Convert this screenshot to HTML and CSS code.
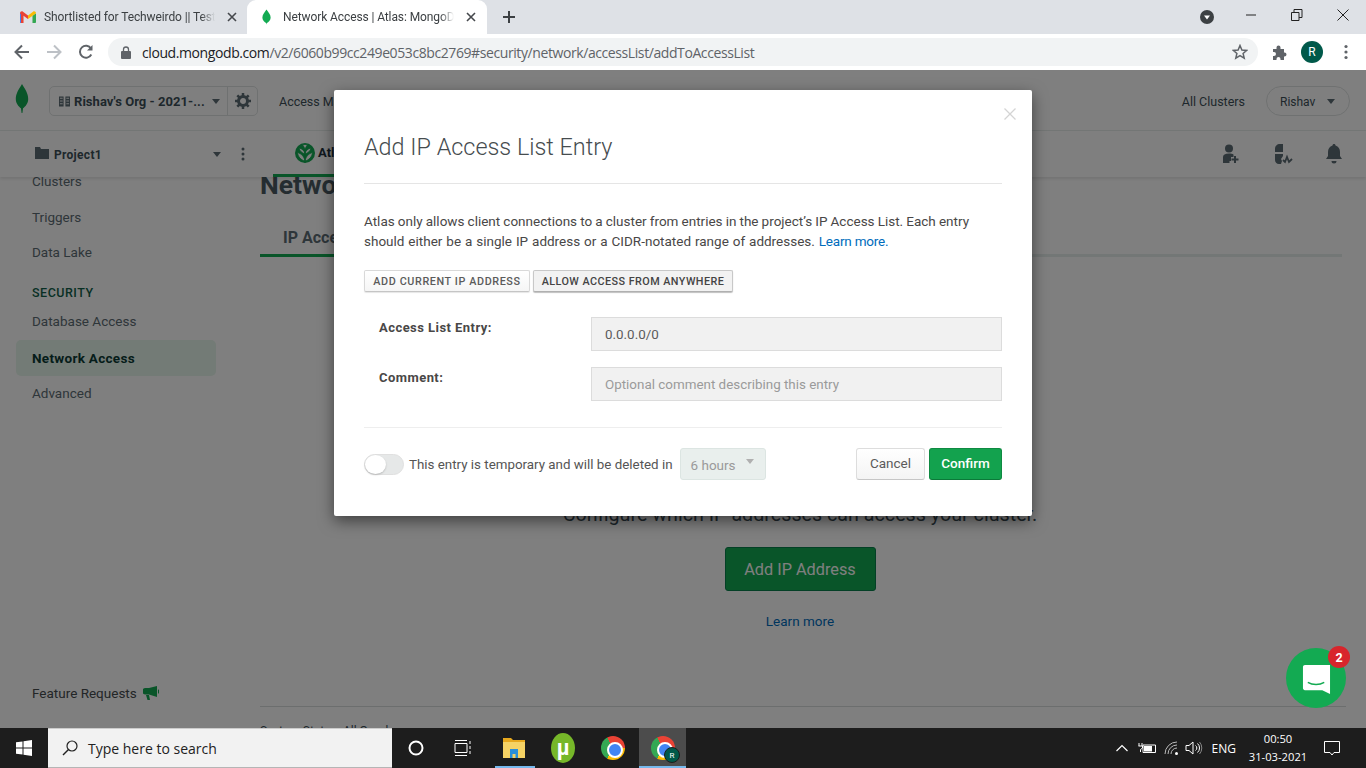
FILE: index.html
```html
<!DOCTYPE html>
<html lang="en">
<head>
<meta charset="utf-8">
<title>Network Access | Atlas: MongoDB</title>
<link rel="stylesheet" href="styles.css">
</head>
<body>
<header class="tabstrip">
  <div class="tab">
    <svg class="tab-icon" viewBox="0 0 16 12" width="16" height="12"><path d="M1 12V2l7 5 7-5v10h-3V5.5L8 8.5 4 5.5V12z" fill="#ddd"/><path d="M0 2.200C0 .5 1.800-.3 3 .7L8 4.500 8 8 3.500 4.700V12H1.100C.5 12 0 11.500 0 11z" fill="#ea4335"/><path d="M1 12V3.500L0 2.200V11c0 .5.5 1 1.100 1z" fill="#4285f4"/><path d="M12.500 12V4.700L16 2.200V11c0 .5-.5 1-1.100 1z" fill="#34a853"/><path d="M8 4.500 13 .7c1.200-1 3-.2 3 1.500L8 8z" fill="#fbbc04"/></svg>
    <span class="tab-title">Shortlisted for Techweirdo || Test</span>
    <svg class="tab-x" viewBox="0 0 10 10" width="10" height="10"><path d="M1 1l8 8M9 1l-8 8" stroke="#45484c" stroke-width="1.600"/></svg>
  </div>
  <div class="tab tab-active">
    <svg class="tab-leaf" viewBox="0 0 12 20" width="9" height="16"><path d="M6 0C3 4 .5 7 .5 11c0 3.500 3 6 5 7l.5 2 .5-2c2-1 5-3.500 5-7 0-4-2.500-7-5.500-11z" fill="#13aa52"/></svg>
    <span class="tab-title">Network Access | Atlas: MongoDB</span>
    <svg class="tab-x" viewBox="0 0 10 10" width="10" height="10"><path d="M1 1l8 8M9 1l-8 8" stroke="#45484c" stroke-width="1.600"/></svg>
  </div>
  <svg class="tab-plus" viewBox="0 0 12 12" width="12" height="12"><path d="M6 0v12M0 6h12" stroke="#3c4043" stroke-width="2"/></svg>
  <div class="strip-right">
    <svg class="profile-drop" viewBox="0 0 14 14" width="14" height="14"><circle cx="7" cy="7" r="7" fill="#3c4043"/><path d="M4 5.500h6L7 9.500z" fill="#fff"/></svg>
    <div class="winbtn"><svg viewBox="0 0 12 12" width="12" height="12"><path d="M1 6h10" stroke="#222" stroke-width="1"/></svg></div>
    <div class="winbtn"><svg viewBox="0 0 12 12" width="12" height="12"><path d="M.5 3.500h7.500v8H.5zM3 3.500V.5h8v8H8" fill="none" stroke="#222"/></svg></div>
    <div class="winbtn"><svg viewBox="0 0 12 12" width="12" height="12"><path d="M.5.5l11 11M11.500.5l-11 11" stroke="#222"/></svg></div>
  </div>
</header>

<nav class="toolbar">
  <svg class="tool" viewBox="0 0 16 16" width="16" height="16"><path d="M15 8H2M8 1.500 1.500 8 8 14.500" fill="none" stroke="#5f6368" stroke-width="2"/></svg>
  <svg class="tool" viewBox="0 0 16 16" width="16" height="16"><path d="M1 8h13M8 1.500 14.500 8 8 14.500" fill="none" stroke="#bdc1c6" stroke-width="2"/></svg>
  <svg class="tool" viewBox="0 0 16 16" width="16" height="16"><path d="M13.300 10.500A6 6 0 1 1 13 4.500" fill="none" stroke="#5f6368" stroke-width="2"/><path d="M14.500 1v5.500H9z" fill="#5f6368"/></svg>
  <div class="omnibox">
    <svg viewBox="0 0 10 13" width="10" height="13"><path d="M2.500 5V3.500a2.500 2.500 0 0 1 5 0V5" fill="none" stroke="#5f6368" stroke-width="1.300"/><rect y="5" width="10" height="8" rx="1" fill="#5f6368"/></svg>
    <span class="url"><b>cloud.mongodb.com</b>/v2/6060b99cc249e053c8bc2769#security/network/accessList/addToAccessList</span>
    <svg class="star" viewBox="0 0 16 16" width="16" height="16"><path d="M8 1.500 9.900 6l4.800.4-3.600 3.100 1.100 4.700L8 11.700l-4.200 2.500 1.100-4.700L1.300 6.400 6.100 6z" fill="none" stroke="#5f6368" stroke-width="1.500"/></svg>
  </div>
  <svg class="puzzle" viewBox="0 0 16 16" width="16" height="16"><path d="M1 5h3.500V3.500a2 2 0 0 1 4 0V5H12v3.500h.5a2 2 0 0 1 0 4H12V16H8.500v-1a2 2 0 0 0-4 0v1H1v-4h1a2 2 0 0 0 0-4H1z" fill="#5f6368"/></svg>
  <span class="avatar">R</span>
  <svg class="menu-dots" viewBox="0 0 4 16" width="4" height="16"><circle cx="2" cy="2.500" r="1.600" fill="#5f6368"/><circle cx="2" cy="8" r="1.600" fill="#5f6368"/><circle cx="2" cy="13.500" r="1.600" fill="#5f6368"/></svg>
</nav>

<main class="page">
  <div class="topbar">
    <svg class="logo" viewBox="0 0 12 28" width="14" height="29"><path d="M6 0C3 5 0 9 0 14.500c0 4.500 3 7.500 5 9l.6 4.500h.8l.6-4.500c2-1.500 5-4.500 5-9C12 9 9 5 6 0z" fill="#13aa52"/></svg>
    <div class="org">
      <div class="org-main">
        <svg viewBox="0 0 12 12" width="11" height="12"><path d="M0 1h5v11H0zM7 1h5v11H7z" fill="#5d6c74"/><path d="M1 3h3M1 6h3M1 9h3M8 3h3M8 6h3M8 9h3" stroke="#fff" stroke-width="1"/></svg>
        <span class="org-name">Rishav's Org - 2021-...</span>
        <i class="caret"></i>
      </div>
      <div class="org-gear">
        <svg viewBox="0 0 16 16" width="16" height="16"><circle cx="8" cy="8" r="4.500" fill="none" stroke="#5d6c74" stroke-width="3"/><path d="M8 0v3M8 13v3M0 8h3M13 8h3M2.300 2.300l2.200 2.200M11.500 11.500l2.200 2.200M13.700 2.300l-2.200 2.200M4.500 11.500l-2.200 2.200" stroke="#5d6c74" stroke-width="2.500"/></svg>
      </div>
    </div>
    <span class="top-link">Access Manager</span>
    <span class="top-link all-clusters">All Clusters</span>
    <div class="user-pill"><span>Rishav</span><i class="caret"></i></div>
  </div>

  <div class="subbar">
    <svg class="folder" viewBox="0 0 14 12" width="14" height="12"><path d="M0 0h5l1 2h8v10H0z" fill="#5d6c74"/></svg>
    <span class="project">Project1</span>
    <i class="caret"></i>
    <svg class="kebab" viewBox="0 0 4 14" width="4" height="14"><circle cx="2" cy="2" r="1.500" fill="#5d6c74"/><circle cx="2" cy="7" r="1.500" fill="#5d6c74"/><circle cx="2" cy="12" r="1.500" fill="#5d6c74"/></svg>
    <div class="atlas-tab">
      <svg viewBox="0 0 20 20" width="20" height="20"><circle cx="10" cy="10" r="10" fill="#13aa52"/><path d="M10 20V6M10 18C6 17 3 14 2.500 9.500 6 10.500 9 13 10 18zM10 18c4-1 7-4 7.500-8.500C14 10.500 11 13 10 18zM10 11C7 10 4.500 8 4 5c3 .5 5.500 2.500 6 6zM10 11c3-1 5.500-3 6-6-3 .5-5.500 2.500-6 6zM10 6 7.500 1.500h5z" fill="#fff" stroke="#13aa52" stroke-width=".8"/></svg>
      <span>Atlas</span>
    </div>
    <div class="sub-icons">
      <svg viewBox="0 0 18 20" width="18" height="20"><circle cx="7" cy="4.500" r="4" fill="#5d6c74"/><path d="M1 19v-6c0-2 2-3.500 6-3.500 2 0 3.500.3 4.500 1V13H9v4H7.500v2z" fill="#5d6c74"/><path d="M13 12v7M9.500 15.500h7" stroke="#5d6c74" stroke-width="2"/></svg>
      <svg viewBox="0 0 20 20" width="20" height="20"><path d="M7 0h3v8H2V5c0-3 2-5 5-5zM2 10h8v2l-2 3 1 2-1 3H6c-2.500 0-4-2-4-4z" fill="#5d6c74"/><path d="M10 16l2 2 2-5 2 5 3-3" fill="none" stroke="#5d6c74" stroke-width="1.800"/></svg>
      <svg viewBox="0 0 16 20" width="16" height="20"><path d="M8 0c1 0 1.500.7 1.500 1.500C12.500 2.500 14 5 14 8v4l2 3H0l2-3V8c0-3 1.500-5.500 4.500-6.500C6.500.7 7 0 8 0zM5.500 17h5a2.500 2.500 0 0 1-5 0z" fill="#5d6c74"/></svg>
    </div>
  </div>

  <div class="content-row">
    <aside class="sidebar">
      <a class="side-item">Clusters</a>
      <a class="side-item">Triggers</a>
      <a class="side-item side-last">Data Lake</a>
      <div class="side-head">SECURITY</div>
      <a class="side-item">Database Access</a>
      <a class="side-item side-active">Network Access</a>
      <a class="side-item side-after">Advanced</a>
      <div class="feature">
        <span>Feature Requests</span>
        <svg viewBox="0 0 16 14" width="16" height="14"><path d="M14 0v11L6 8.500H2.500A2.500 2.500 0 0 1 2.500 2H6zM15 3.500a2 2 0 0 1 0 4zM3 9h3l1 5H4.500z" fill="#13aa52"/></svg>
      </div>
    </aside>
    <section class="main">
      <h1>Network Access</h1>
      <div class="tabs"><span class="ip-tab">IP Access List</span></div>
      <div class="empty">
        <p>Configure which IP addresses can access your cluster.</p>
        <a class="add-btn">Add IP Address</a>
        <a class="empty-link">Learn more</a>
      </div>
      <footer class="page-foot">System Status: All Good</footer>
    </section>
  </div>

  <div class="backdrop"></div>

  <div class="modal">
    <span class="modal-close">
      <svg viewBox="0 0 12 12" width="12" height="12"><path d="M.5.500l11 11M11.500.500l-11 11" stroke="#d4d4d4" stroke-width="1.300"/></svg>
    </span>
    <h2>Add IP Access List Entry</h2>
    <p class="intro"><span class="intro-first">Atlas only allows client connections to a cluster from entries in the project’s IP Access List. Each entry</span> <span class="intro-second">should either be a single IP address or a CIDR-notated range of addresses. <a>Learn more.</a></span></p>
    <div class="ip-btns">
      <span class="mini-btn mini-first">ADD CURRENT IP ADDRESS</span>
      <span class="mini-btn mini-pressed">ALLOW ACCESS FROM ANYWHERE</span>
    </div>
    <div class="form-row">
      <span class="form-label">Access List Entry:</span>
      <span class="field">0.0.0.0/0</span>
    </div>
    <div class="form-row">
      <span class="form-label">Comment:</span>
      <span class="field field-ph">Optional comment describing this entry</span>
    </div>
    <div class="modal-foot">
      <span class="toggle"><i></i></span>
      <span class="temp">This entry is temporary and will be deleted in</span>
      <span class="hours">6 hours<i></i></span>
      <span class="btn-cancel">Cancel</span>
      <span class="btn-confirm">Confirm</span>
    </div>
  </div>

  <div class="chat">
    <svg viewBox="0 0 30 32" width="29" height="31"><path d="M3 1h26v30l-8-4H3c-1 0-2-1-2-2V3c0-1 1-2 2-2z" fill="#fff"/><path d="M6 19c5 3 12 3 17 0" fill="none" stroke="#13aa52" stroke-width="1.500"/></svg>
    <span class="chat-badge">2</span>
  </div>
</main>

<footer class="taskbar">
  <svg class="win" viewBox="0 0 16 16" width="16" height="16"><path d="M0 2.300 6.500 1.400V7.500H0zM7.500 1.200 16 0V7.500H7.500zM0 8.500H6.500V14.600L0 13.700zM7.500 8.500H16V16L7.500 14.800z" fill="#fff"/></svg>
  <div class="search">
    <svg viewBox="0 0 16 16" width="16" height="16"><circle cx="10" cy="6" r="5" fill="none" stroke="#222" stroke-width="1.200"/><path d="M6.500 9.500 1 15" stroke="#222" stroke-width="1.500"/></svg>
    <span>Type here to search</span>
  </div>
  <div class="task-slot task-sys"><svg viewBox="0 0 16 16" width="16" height="16"><circle cx="8" cy="8" r="6.500" fill="none" stroke="#fff" stroke-width="2"/></svg></div>
  <div class="task-slot task-sys"><svg viewBox="0 0 18 16" width="18" height="16"><path d="M1 3.500h12v9H1zM1 .5h12M1 15.500h12M16 1v3M16 6v3M16 11v3" fill="none" stroke="#fff" stroke-width="1"/></svg></div>
  <div class="task-slot task-open"><svg viewBox="0 0 22 20" width="22" height="20"><path d="M0 0h8l2 2h12v4H0z" fill="#e8a91e"/><path d="M0 4h22v16H0z" fill="#f6d365"/><path d="M7 11h8v9H7z" fill="#2b8fd8"/><path d="M9.500 16h3v4h-3z" fill="#f6d365"/></svg></div>
  <div class="task-slot task-next"><span class="torrent">µ</span></div>
  <div class="task-slot task-next"><i class="chrome"></i></div>
  <div class="task-slot task-active"><i class="chrome"></i><span class="mini-avatar">R</span></div>
  <div class="tray">
    <svg class="tray-up" viewBox="0 0 12 8" width="12" height="8"><path d="M.5 7 6 1.500 11.500 7" fill="none" stroke="#fff" stroke-width="1.200"/></svg>
    <svg viewBox="0 0 18 12" width="18" height="12"><path d="M5 3h12.500v7.500H5z" fill="none" stroke="#fff"/><path d="M6 4h8v5.500H6z" fill="#fff"/><path d="M1 1v3M4 1v3M.5 4h4v2l-2 1.500V10" fill="none" stroke="#fff"/></svg>
    <svg viewBox="0 0 16 14" width="16" height="14"><path d="M1 13A12 12 0 0 1 13 1M4 13a9 9 0 0 1 9-9M7 13a6 6 0 0 1 6-6" fill="none" stroke="#bbb"/><circle cx="12.500" cy="12.500" r="1.500" fill="#fff"/></svg>
    <svg class="tray-sound" viewBox="0 0 18 14" width="18" height="14"><path d="M1 4.500h3L8 1v12L4 9.500H1z" fill="none" stroke="#fff"/><path d="M10.500 4.500a3 3 0 0 1 0 5M12.500 2.500a6 6 0 0 1 0 9" fill="none" stroke="#fff"/><path d="M14.500 1a9 9 0 0 1 0 12" fill="none" stroke="#888"/></svg>
    <span class="lang">ENG</span>
    <div class="clock"><span>00:50</span><span>31-03-2021</span></div>
    <svg class="notif" viewBox="0 0 16 16" width="16" height="16"><path d="M.5 1.500h15v11H10L8 15l-2-2.500H.5z" fill="none" stroke="#fff"/></svg>
  </div>
</footer>
</body>
</html>
```

FILE: styles.css
```css
* { box-sizing: border-box; }
html, body { margin: 0; height: 100%; }
body {
  width: 1366px; height: 768px; overflow: hidden;
  display: flex; flex-direction: column;
  font-family: Roboto, "Liberation Sans", sans-serif;
  color: #3d4f58;
  background: #fff;
}
h1, h2, p { margin: 0; }

/* browser tab strip */
.tabstrip { height: 34px; flex: none; background: #dee1e6; display: flex; align-items: stretch; font-family: Roboto, sans-serif; }
.tab { width: 247px; display: flex; align-items: center; padding: 0 10px 0 20px; font-size: 12px; color: #3c4043; }
.tab-icon { flex: none; margin-right: 8px; }
.tab-title { flex: 1; min-width: 0; white-space: nowrap; overflow: hidden; margin-right: 12px; letter-spacing: -.1px; -webkit-mask-image: linear-gradient(to left, transparent, #000 14px); mask-image: linear-gradient(to left, transparent, #000 14px); }
.tab-x { flex: none; }
.tab-active { width: 240px; background: #fff; border-radius: 9px 9px 0 0; padding: 0 11px 0 15px; }
.tab-leaf { flex: none; margin-right: 12px; }
.tab-plus { align-self: center; margin-left: 16px; }
.strip-right { margin-left: auto; display: flex; align-items: flex-start; }
.profile-drop { margin: 10px 14px 0 0; }
.winbtn { width: 46px; height: 29px; display: flex; align-items: center; justify-content: center; }

/* browser toolbar */
.toolbar { height: 36px; flex: none; background: #fff; display: flex; align-items: center; padding-left: 14px; }
.tool { flex: none; margin-right: 16px; }
.omnibox { flex: none; width: 1150px; height: 28px; margin-left: -2px; border-radius: 14px; background: #f1f3f4; display: flex; align-items: center; padding: 0 10px 0 13px; }
.url { margin-left: 11px; font: 14px "Open Sans", sans-serif; letter-spacing: -.41px; color: #5f6368; white-space: nowrap; }
.url b { font-weight: 400; color: #202124; }
.star { margin-left: auto; }
.puzzle { margin-left: 14px; flex: none; }
.avatar { flex: none; width: 22px; height: 22px; margin-left: 13px; border-radius: 50%; background: #00594a; color: #fff; font-size: 12px; display: flex; align-items: center; justify-content: center; }
.menu-dots { flex: none; margin-left: 21px; }

/* underlying page */
.page { position: relative; flex: 1; min-height: 0; overflow: hidden; display: flex; flex-direction: column; background: #fff; }
.topbar { height: 61px; flex: none; border-bottom: 1px solid #e7eeec; display: flex; align-items: center; padding: 2px 16px 0 15px; font-size: 13px; }
.logo { flex: none; margin: 0 20px 6px 0; }
.org { width: 209px; height: 30px; border: 1px solid #dfe3e3; border-radius: 5px; display: flex; flex: none; }
.org-main { flex: 1; display: flex; align-items: center; padding: 0 7px 0 9px; border-right: 1px solid #dfe3e3; }
.org-name { margin-left: 4px; font-size: 13px; font-weight: 700; white-space: nowrap; flex: 1; letter-spacing: .05px; }
.org-gear { width: 29px; display: flex; align-items: center; justify-content: center; }
.caret { flex: none; width: 0; height: 0; border-left: 4px solid transparent; border-right: 4px solid transparent; border-top: 5px solid #5d6c74; }
.top-link { margin-left: 21px; white-space: nowrap; font-size: 12.500px; }
.all-clusters { margin-left: auto; }
.user-pill { flex: none; width: 84px; height: 30px; margin-left: 21px; border: 1px solid #dfe3e3; border-radius: 15px; display: flex; align-items: center; justify-content: space-between; padding: 1px 14px 0 13px; font-size: 12px; }

.subbar { position: relative; z-index: 1; height: 46px; flex: none; background: #fff; display: flex; align-items: center; padding-left: 35px; box-shadow: 0 2px 3px rgba(0,0,0,.1); }
.folder { margin: -3px 5px 0 0; flex: none; }
.project { font-size: 12px; font-weight: 700; width: 159px; letter-spacing: .3px; margin-top: 2px; }
.kebab { margin-left: 20px; flex: none; }
.atlas-tab { margin-left: 28px; align-self: stretch; width: 200px; display: flex; align-items: center; padding-left: 22px; gap: 3px; font-size: 13px; font-weight: 700; border-bottom: 3px solid #13aa52; color: #21313c; }
.sub-icons { margin-left: auto; display: flex; align-items: center; gap: 33px; padding-right: 24px; }

.content-row { flex: 1; min-height: 0; margin-top: -14px; display: flex; }
.sidebar { width: 260px; flex: none; padding: 0 44px 27px 16px; display: flex; flex-direction: column; font-size: 13.500px; }
.side-item { height: 36px; flex: none; padding-left: 16px; border-radius: 5px; display: flex; align-items: center; color: #5d6c74; }
.side-last { margin: -1px 0 11px; }
.side-head { height: 22px; flex: none; padding-left: 16px; font-size: 12.500px; font-weight: 500; color: #116149; letter-spacing: .5px; display: flex; align-items: center; }
.side-active { width: 200px; margin-top: 1px; background: #e7f6ec; color: #0b3b35; font-weight: 700; letter-spacing: .3px; }
.side-after { margin-top: -1px; }
.feature { margin-top: auto; padding-left: 16px; display: flex; align-items: center; gap: 6px; color: #464c4f; }

.main { flex: 1; min-width: 0; display: flex; flex-direction: column; padding-right: 26px; overflow: hidden; }
.main h1 { margin-top: 8px; height: 28px; line-height: 28px; font-size: 26.500px; font-weight: 700; color: #4a5a63; white-space: nowrap; }
.tabs { margin-top: 22px; height: 36px; margin-right: -2px; border-bottom: 3px solid #e7eeec; flex: none; }
.ip-tab { display: inline-block; height: 36px; padding: 0 23px; line-height: 34px; border-bottom: 3px solid #13aa52; font-size: 16px; font-weight: 700; color: #5d6c74; }
.empty { margin-top: 246px; display: flex; flex-direction: column; align-items: center; flex: none; }
.empty p { font-size: 19.700px; line-height: 24px; white-space: nowrap; }
.add-btn { margin-top: 20px; width: 151px; height: 44px; background: #13aa52; border: 1px solid #09804c; border-radius: 3px; color: #fff; font-size: 16.300px; font-weight: 400; display: flex; align-items: center; justify-content: center; }
.empty-link { margin-top: 21px; font-size: 13.500px; line-height: 18px; color: #006cbc; }
.page-foot { margin: auto -6px 0 0; height: 22px; flex: none; border-top: 1px solid #d8dcdc; padding-top: 17px; overflow: hidden; font-size: 12px; line-height: 14px; }

.backdrop { position: absolute; inset: 0; z-index: 2; background: rgba(0,0,0,.5); }

/* modal */
.modal { position: absolute; z-index: 3; left: 334px; top: 20px; width: 698px; height: 426px; padding: 0 30px; background: #fff; border-radius: 2px; box-shadow: 0 5px 15px rgba(0,0,0,.5); color: #494747; }
.modal-close { position: absolute; top: 18px; right: 16px; line-height: 0; }
.modal h2 { height: 94px; padding-top: 39px; line-height: 36px; border-bottom: 1px solid #e5e5e5; font-size: 23.400px; font-weight: 300; color: #464c4f; }
.intro { margin-top: 27px; font-size: 13.500px; line-height: 20px; }
.intro-first, .intro-second { display: block; white-space: nowrap; }
.intro-first { word-spacing: -.24px; }
.intro-second { word-spacing: .58px; }
.intro a { color: #006cbc; letter-spacing: -.2px; word-spacing: 0; }
.ip-btns { margin-top: 19px; display: flex; gap: 3px; }
.mini-btn { width: 200px; height: 22px; display: flex; align-items: center; justify-content: center; border: 1px solid #d9d9d9; border-bottom-color: #c5c5c5; border-radius: 2px; background: linear-gradient(#fff, #f5f5f5); font-size: 10.800px; font-weight: 500; letter-spacing: .45px; color: #5b5b5b; box-shadow: 0 1px 1px rgba(0,0,0,.1); white-space: nowrap; }
.mini-first { width: 166px; letter-spacing: .6px; }
.mini-pressed { background: #f2f2f2; border-color: #c8c8c8; border-bottom-color: #b0b0b0; color: #444; box-shadow: 0 1px 1px rgba(0,0,0,.25); }
.form-row { margin-top: 16px; display: flex; padding-left: 15px; }
.ip-btns + .form-row { margin-top: 25px; }
.form-label { width: 212px; flex: none; font-size: 13px; line-height: 20px; font-weight: 700; padding-top: 1px; letter-spacing: .45px; }
.field { flex: 1; height: 34px; padding: 0 13px; display: flex; align-items: center; background: #f1f1f1; border: 1px solid #dcdcdc; font-size: 13.400px; color: #5b5b5b; }
.field-ph { color: #9a9a9a; }
.modal-foot { margin-top: 26px; border-top: 1px solid #eee; padding-top: 20px; display: flex; align-items: center; height: 53px; }
.toggle { width: 40px; height: 21px; flex: none; border-radius: 11px; background: #e6e8e8; border: 1px solid #e0e0e0; }
.toggle i { display: block; width: 21px; height: 19px; border-radius: 50%; background: #fff; box-shadow: 0 1px 2px rgba(0,0,0,.2); }
.temp { margin-left: 5px; font-size: 13.350px; white-space: nowrap; color: #555; }
.hours { position: relative; margin-left: 7px; width: 86px; height: 32px; flex: none; background: #e9efed; border: 1px solid #dce5e2; border-radius: 3px; color: #9a9a9a; font-size: 13.500px; display: flex; align-items: center; padding: 2px 10px 0; }
.hours i { position: absolute; right: 11px; top: 10px; width: 0; height: 0; border-left: 4px solid transparent; border-right: 4px solid transparent; border-top: 5px solid #b0b0b0; }
.btn-cancel { margin-left: auto; width: 69px; height: 32px; flex: none; display: flex; align-items: center; justify-content: center; padding-bottom: 2px; background: linear-gradient(#fff, #f4f4f4); border: 1px solid #ddd; border-bottom-color: #c6c6c6; border-radius: 3px; font-size: 13.500px; color: #5b5b5b; }
.btn-confirm { margin-left: 4px; width: 73px; height: 32px; flex: none; display: flex; align-items: center; justify-content: center; padding-bottom: 2px; background: #13a24e; border: 1px solid #0f8a42; border-bottom-color: #0b7a39; border-radius: 3px; font-size: 13.500px; font-weight: 500; color: #fff; }

/* chat bubble */
.chat { position: absolute; z-index: 4; left: 1286px; top: 578px; width: 60px; height: 60px; border-radius: 50%; background: #13aa52; display: flex; align-items: center; justify-content: center; padding-top: 2px; }
.chat-badge { position: absolute; top: -2px; right: -4px; width: 22px; height: 22px; border-radius: 50%; background: #d8252c; color: #fff; font-size: 12.500px; font-weight: 700; display: flex; align-items: center; justify-content: center; }

/* windows taskbar */
.taskbar { height: 40px; flex: none; background: #1d1d1d; display: flex; align-items: center; }
.win { flex: none; margin: 0 16px; }
.search { width: 344px; height: 40px; flex: none; background: #f2f2f2; border-top: 1px solid #ccc; border-bottom: 1px solid #b5b5b5; display: flex; align-items: center; padding-left: 14px; gap: 10px; font: 14px "Open Sans", sans-serif; color: #222; }
.task-slot { position: relative; width: 48px; height: 40px; flex: none; display: flex; align-items: center; justify-content: center; }
.task-sys { width: 47px; }
.task-open { margin-left: 4px; }
.task-next { margin-left: 1px; }
.task-next + .task-next { margin-left: 2px; }
.task-open::after, .task-active::after { content: ""; position: absolute; left: 5px; right: 3px; bottom: 0; height: 2px; background: #76b9ed; }
.task-active { width: 47px; margin-left: 2px; background: #4c4c4c; }
.task-active::after { left: 0; right: 0; }
.torrent { width: 24px; height: 30px; border-radius: 50%; background: #76b729; color: #fff; font: 700 22px "Liberation Sans", sans-serif; display: flex; align-items: center; justify-content: center; }
.chrome { width: 24px; height: 24px; border-radius: 50%; position: relative; background: conic-gradient(from -30deg, #ea4335 0 120deg, #fbbc04 120deg 240deg, #34a853 240deg 360deg); display: block; }
.chrome::after { content: ""; position: absolute; left: 6px; top: 6px; width: 12px; height: 12px; border-radius: 50%; background: #4285f4; border: 2px solid #fff; }
.mini-avatar { position: absolute; left: 25px; top: 19px; width: 16px; height: 16px; border-radius: 50%; background: #00594a; border: 1px solid #1d1d1d; color: #fff; font-size: 8px; display: flex; align-items: center; justify-content: center; }
.tray { margin-left: auto; display: flex; align-items: center; gap: 8px; padding-right: 26px; color: #fff; font: 12px "Open Sans", sans-serif; }
.tray-up { margin-right: 2px; }
.tray-sound { margin-left: -3px; }
.lang { margin-left: 1px; }
.clock { width: 66px; margin-left: 1px; display: flex; flex-direction: column; align-items: center; line-height: 18px; font-size: 11.200px; }
.notif { margin-left: 5px; }
```
